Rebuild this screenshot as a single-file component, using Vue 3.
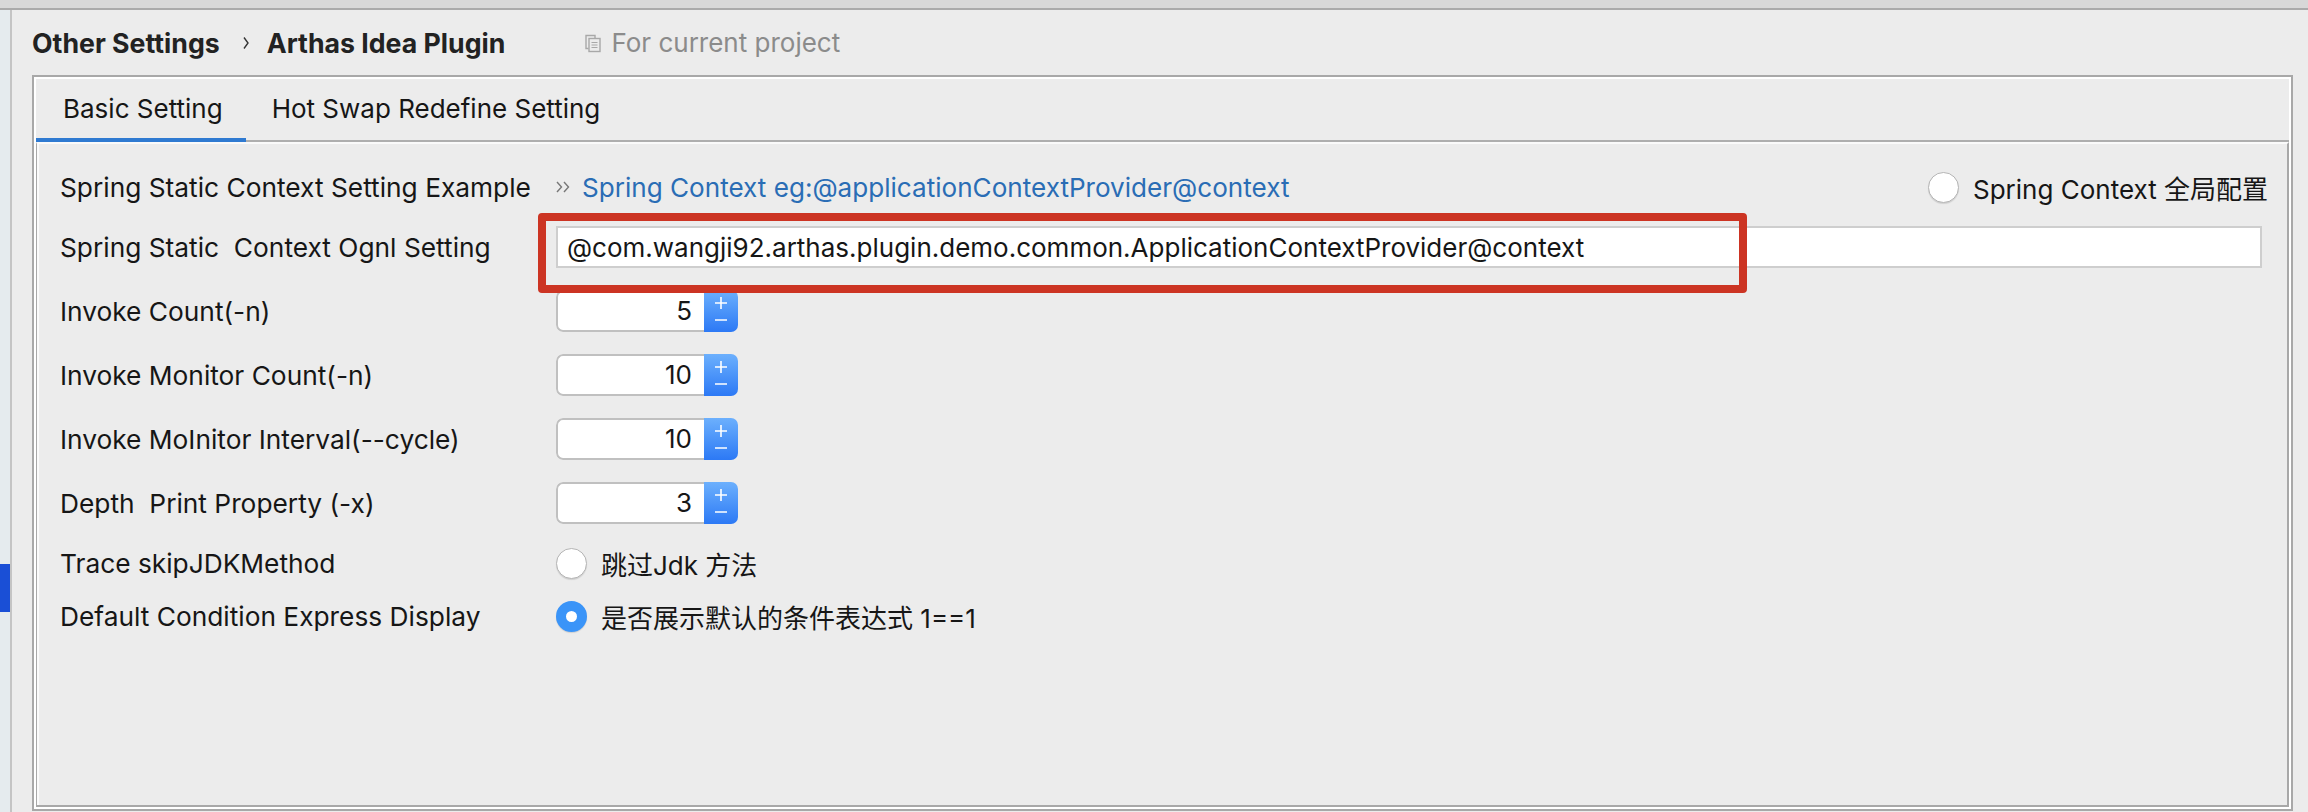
<template>
  <div class="window">
    <div class="top-bar"></div>
    <div class="body">
      <div class="side-strip">
        <div class="side-selected"></div>
      </div>
      <div class="content">
        <div class="crumbs">
          <span class="crumb">Other Settings</span>
          <svg class="crumb-arrow" width="8" height="16" viewBox="0 0 8 16">
            <path d="M2 2.5 L6 8 L2 13.5" fill="none" stroke="#333" stroke-width="1.4" />
          </svg>
          <span class="crumb second">Arthas Idea Plugin</span>
          <svg class="project-icon" width="20" height="20" viewBox="0 0 20 20">
            <path d="M5.5 15.5 H3 V2.5 H12 V5" fill="none" stroke="#a8a8a8" stroke-width="1.4" />
            <rect x="6" y="5.5" width="11" height="13" fill="none" stroke="#a8a8a8" stroke-width="1.4" />
            <path d="M8.5 9.5 H14.5 M8.5 12 H14.5 M8.5 14.5 H14.5" stroke="#a8a8a8" stroke-width="1.1" />
          </svg>
          <span class="project-text">For current project</span>
        </div>

        <div class="tab-panel">
          <div class="tabs">
            <div class="tab active">Basic Setting</div>
            <div class="tab">Hot Swap Redefine Setting</div>
          </div>

          <div class="form">
            <div class="row first-row">
              <label class="label">Spring Static Context Setting Example</label>
              <svg class="link-arrows" width="16" height="14" viewBox="0 0 16 14">
                <path d="M1 2 L5.5 7 L1 12 M8 2 L12.5 7 L8 12" fill="none" stroke="#777" stroke-width="1.4" />
              </svg>
              <a class="link">Spring Context eg:@applicationContextProvider@context</a>
              <div class="radio-item global">
                <span class="radio"></span>
                <span>Spring Context 全局配置</span>
              </div>
            </div>

            <div class="row input-row">
              <label class="label">Spring Static&nbsp; Context Ognl Setting</label>
              <input class="text-input" value="@com.wangji92.arthas.plugin.demo.common.ApplicationContextProvider@context" />
            </div>

            <div v-for="item in spinners" :key="item.label" class="row spinner-row">
              <label class="label">{{ item.label }}</label>
              <div class="spinner">
                <div class="spinner-value">{{ item.value }}</div>
                <div class="spinner-buttons">
                  <svg width="34" height="42" viewBox="0 0 34 42">
                    <path d="M17 7 V19 M11 13 H23 M11 30 H23" stroke="#fff" stroke-width="1.6" fill="none" />
                  </svg>
                </div>
              </div>
            </div>

            <div class="row radio-row skip-row">
              <label class="label">Trace skipJDKMethod</label>
              <div class="radio-item">
                <span class="radio"></span>
                <span>跳过Jdk 方法</span>
              </div>
            </div>

            <div class="row radio-row default-row">
              <label class="label">Default Condition Express Display</label>
              <div class="radio-item">
                <span class="radio checked"></span>
                <span>是否展示默认的条件表达式 1==1</span>
              </div>
            </div>

            <div class="highlight"></div>
          </div>
        </div>
      </div>
    </div>
  </div>
</template>

<script setup>
const spinners = [
  { label: 'Invoke Count(-n)', value: 5 },
  { label: 'Invoke Monitor Count(-n)', value: 10 },
  { label: 'Invoke MoInitor Interval(--cycle)', value: 10 },
  { label: 'Depth\u00a0 Print Property (-x)', value: 3 },
];
</script>

<style>
html,
body {
  margin: 0;
  background: #ececec;
  overflow: hidden;
}
</style>

<style scoped>
.window {
  width: 2308px;
  height: 812px;
  overflow: hidden;
  background: #ececec;
  color: #161616;
  font-family: Inter, "Noto Sans CJK SC", sans-serif;
  font-size: 26px;
  display: flex;
  flex-direction: column;
}

.top-bar {
  height: 8px;
  flex: none;
  background: #d8d8d8;
  border-bottom: 2px solid #aaaaaa;
}

.body {
  flex: 1;
  display: flex;
  min-height: 0;
}

.side-strip {
  width: 12px;
  flex: none;
  background: #e5ebee;
  border-right: 2px solid #c4c4c4;
  padding-top: 554px;
  box-sizing: border-box;
}

.side-selected {
  height: 48px;
  background: #1a4fd6;
}

.content {
  flex: 1;
  padding-left: 20px;
  padding-right: 15px;
  display: flex;
  flex-direction: column;
}

.crumbs {
  height: 65px;
  flex: none;
  display: flex;
  align-items: center;
}

.crumb {
  font-weight: 700;
  font-size: 26.7px;
  color: #222;
}

.crumb-arrow {
  margin-left: 22px;
}

.second {
  margin-left: 17px;
}

.project-icon {
  margin-left: 78px;
}

.project-text {
  margin-left: 8px;
  color: #8b8b8b;
}

.tab-panel {
  flex: none;
  height: 736px;
  border: 2px solid #a8a8a8;
  box-sizing: border-box;
  box-shadow: inset 0 0 0 2px #fff;
  padding: 2px;
  display: flex;
  flex-direction: column;
}

.tabs {
  height: 63px;
  flex: none;
  box-sizing: border-box;
  display: flex;
  border-bottom: 2px solid #aeaeae;
}

.tab {
  padding: 0 23px 0 26px;
  line-height: 60px;
}

.tab.active {
  box-shadow: inset 0 -4px 0 #2f7ad1;
  height: 63px;
  flex: none;
  box-sizing: border-box;
  padding-left: 27px;
}

.form {
  flex: 1;
  position: relative;
  border-left: 1px solid #a8a8a8;
  border-right: 2px solid #a8a8a8;
  border-bottom: 2px solid #a8a8a8;
  border-top: 2px solid #fafafa;
  box-shadow: inset 2px 0 0 #fafafa;
  padding: 22px 0 0 23px;
  box-sizing: border-box;
  min-height: 0;
}

.row {
  display: flex;
  align-items: center;
  height: 42px;
}

.label {
  width: 496px;
  flex: none;
  white-space: pre;
  font-size: 26.3px;
}

.link-arrows {
  flex: none;
}

.link {
  margin-left: 10px;
  color: #2a6db5;
  font-size: 26.1px;
}

.global {
  margin-left: auto;
  margin-right: 19px;
}

.input-row {
  margin-top: 18px;
}

.text-input {
  width: 1706px;
  height: 42px;
  box-sizing: border-box;
  padding: 0 9px;
  border: 2px solid #cecece;
  background: #fff;
  color: #161616;
  font: inherit;
  outline: none;
}

.spinner-row {
  margin-top: 22px;
}

.spinner {
  width: 182px;
  height: 42px;
  display: flex;
  border-radius: 7px;
  overflow: hidden;
}

.spinner-value {
  flex: 1;
  background: #fff;
  border: 2px solid #c0c0c0;
  border-right: none;
  border-radius: 7px 0 0 7px;
  padding-right: 12px;
  text-align: right;
  line-height: 38px;
}

.spinner-buttons {
  width: 34px;
  height: 42px;
  flex: none;
  background: linear-gradient(#6cb0fd, #2c79f5);
}

.spinner-buttons svg {
  display: block;
}

.radio-row {
  height: 32px;
}

.skip-row {
  margin-top: 23px;
}

.default-row {
  margin-top: 21px;
}

.radio-item {
  display: flex;
  align-items: center;
  gap: 14px;
}

.radio {
  width: 31px;
  height: 31px;
  flex: none;
  box-sizing: border-box;
  border-radius: 50%;
  border: 1px solid #b5b5b5;
  background: #fff;
  box-shadow: 0 1px 1px rgba(0, 0, 0, 0.12);
}

.radio.checked {
  border: 10px solid #3a94f8;
}

.highlight {
  position: absolute;
  left: 501px;
  top: 69px;
  width: 1209px;
  height: 80px;
  box-sizing: border-box;
  border: 8px solid #cc3423;
  border-radius: 4px;
  pointer-events: none;
}
</style>
